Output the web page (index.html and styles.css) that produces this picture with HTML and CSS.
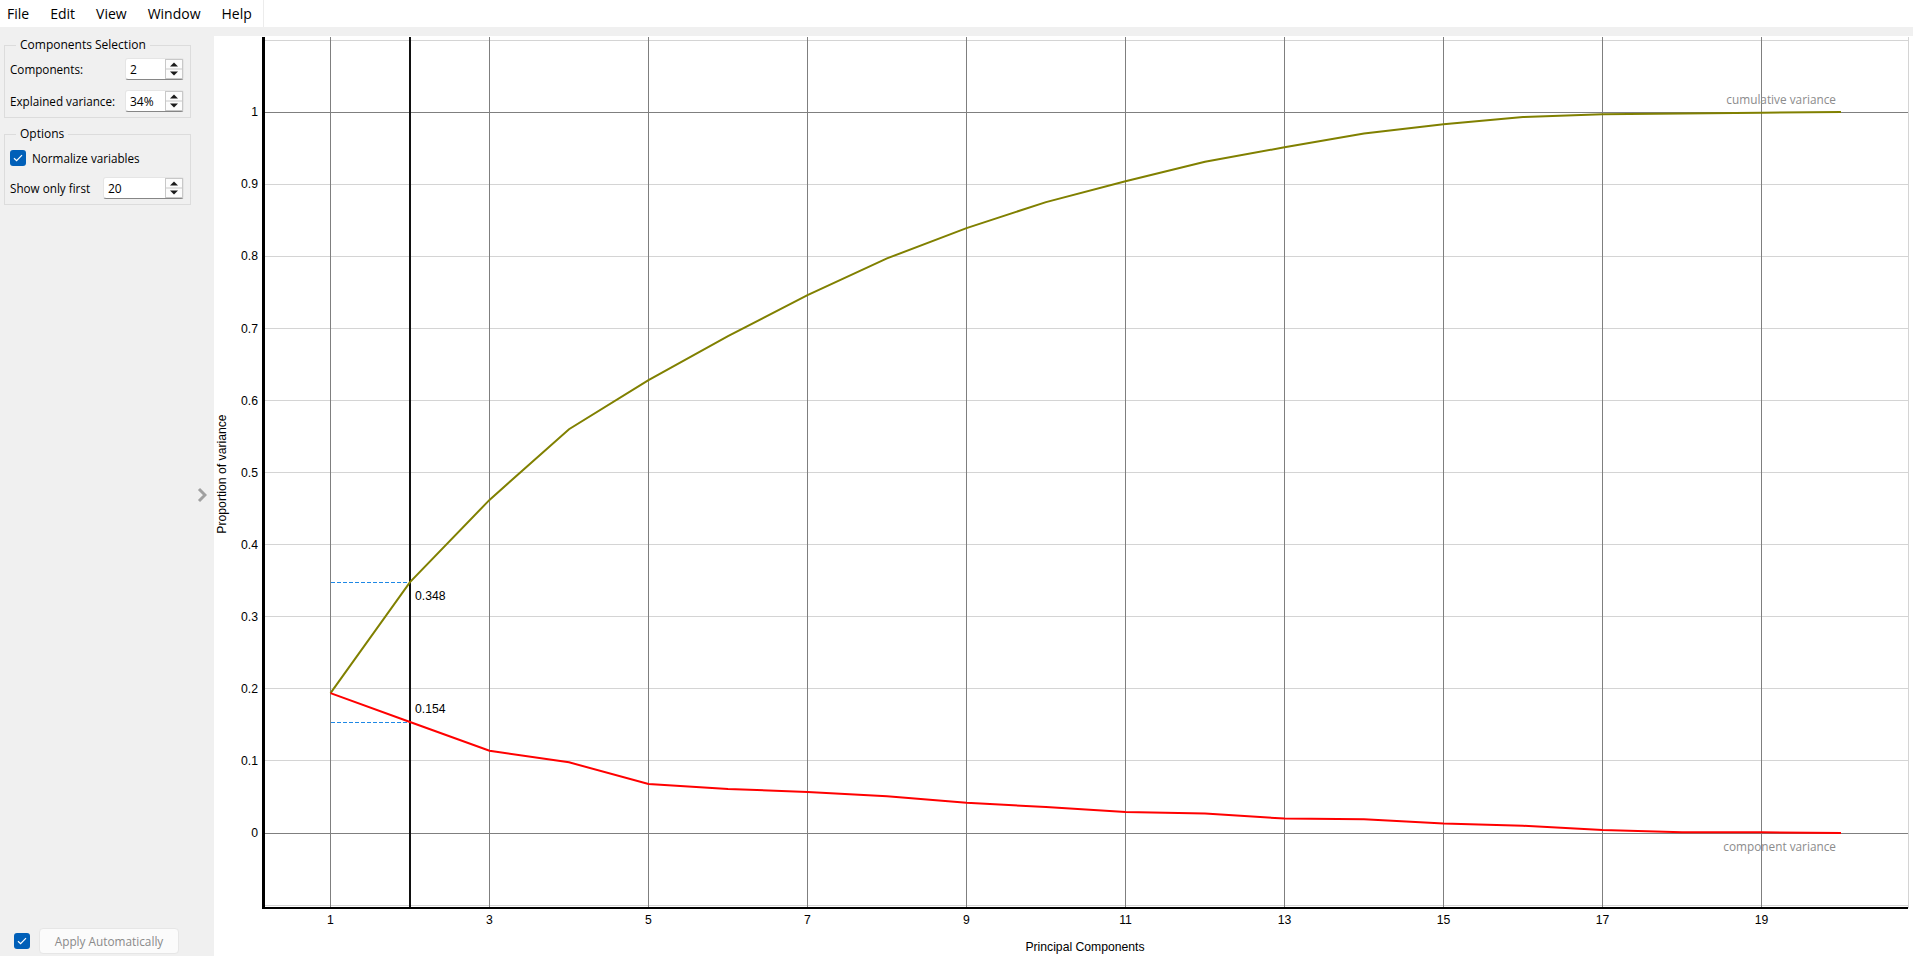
FILE: index.html
```html
<!DOCTYPE html>
<html lang="en">
<head>
    <meta charset="UTF-8">
    <title>PCA</title>
    <link rel="stylesheet" href="styles.css">
</head>
<body>
<div class="menubar">
    <ul class="menu">
        <li>File</li>
        <li>Edit</li>
        <li>View</li>
        <li>Window</li>
        <li>Help</li>
    </ul>
</div>

<div class="main">
    <aside class="sidebar">
        <div class="controls">
            <fieldset class="group">
                <legend>Components Selection</legend>
                <div class="row">
                    <label>Components:</label>
                    <div class="spin">
                        <span class="spin-value">2</span>
                        <svg class="spin-buttons" width="18" height="20" viewBox="0 0 18 20">
                            <rect x="0.5" y="0.5" width="17" height="19" fill="#fcfcfc" stroke="#c8c8c8"/>
                            <line x1="1" y1="10" x2="17" y2="10" stroke="#c8c8c8"/>
                            <path d="M5 7.5 L9 3.5 L13 7.5 Z" fill="#1a1a1a"/>
                            <path d="M5 12.5 L9 16.5 L13 12.5 Z" fill="#1a1a1a"/>
                        </svg>
                    </div>
                </div>
                <div class="row">
                    <label>Explained variance:</label>
                    <div class="spin">
                        <span class="spin-value">34%</span>
                        <svg class="spin-buttons" width="18" height="20" viewBox="0 0 18 20">
                            <rect x="0.5" y="0.5" width="17" height="19" fill="#fcfcfc" stroke="#c8c8c8"/>
                            <line x1="1" y1="10" x2="17" y2="10" stroke="#c8c8c8"/>
                            <path d="M5 7.5 L9 3.5 L13 7.5 Z" fill="#1a1a1a"/>
                            <path d="M5 12.5 L9 16.5 L13 12.5 Z" fill="#1a1a1a"/>
                        </svg>
                    </div>
                </div>
            </fieldset>

            <fieldset class="group options">
                <legend>Options</legend>
                <div class="row">
                    <span class="check">
                        <svg width="10" height="8" viewBox="0 0 10 8"><path d="M1 4.2 L3.6 6.6 L9 1.2" fill="none" stroke="#fff" stroke-width="1.2"/></svg>
                    </span>
                    <label class="check-label">Normalize variables</label>
                </div>
                <div class="row">
                    <label>Show only first</label>
                    <div class="spin wide">
                        <span class="spin-value">20</span>
                        <svg class="spin-buttons" width="18" height="20" viewBox="0 0 18 20">
                            <rect x="0.5" y="0.5" width="17" height="19" fill="#fcfcfc" stroke="#c8c8c8"/>
                            <line x1="1" y1="10" x2="17" y2="10" stroke="#c8c8c8"/>
                            <path d="M5 7.5 L9 3.5 L13 7.5 Z" fill="#1a1a1a"/>
                            <path d="M5 12.5 L9 16.5 L13 12.5 Z" fill="#1a1a1a"/>
                        </svg>
                    </div>
                </div>
            </fieldset>

            <div class="auto-row">
                <span class="check">
                    <svg width="10" height="8" viewBox="0 0 10 8"><path d="M1 4.2 L3.6 6.6 L9 1.2" fill="none" stroke="#fff" stroke-width="1.2"/></svg>
                </span>
                <button class="apply-btn">Apply Automatically</button>
            </div>
        </div>
        <div class="handle">
            <svg width="10" height="16" viewBox="0 0 10 16"><polyline points="2,2 8,8 2,14" fill="none" stroke="#a0a0a0" stroke-width="3"/></svg>
        </div>
    </aside>

    <div class="plot">
        <svg width="1699" height="920" viewBox="214 36 1699 920">
            <!-- light grid -->
            <g class="grid-light">
                <line x1="263" y1="40.5" x2="1908" y2="40.5"/>
                <line x1="263" y1="184.5" x2="1908" y2="184.5"/>
                <line x1="263" y1="256.5" x2="1908" y2="256.5"/>
                <line x1="263" y1="328.5" x2="1908" y2="328.5"/>
                <line x1="263" y1="400.5" x2="1908" y2="400.5"/>
                <line x1="263" y1="472.5" x2="1908" y2="472.5"/>
                <line x1="263" y1="544.5" x2="1908" y2="544.5"/>
                <line x1="263" y1="616.5" x2="1908" y2="616.5"/>
                <line x1="263" y1="688.5" x2="1908" y2="688.5"/>
                <line x1="263" y1="760.5" x2="1908" y2="760.5"/>
                <line x1="263" y1="905.5" x2="1908" y2="905.5"/>
                <line x1="1908.5" y1="37" x2="1908.5" y2="908"/>
            </g>
            <!-- dark grid -->
            <g class="grid-dark">
                <line x1="263" y1="112.5" x2="1908" y2="112.5"/>
                <line x1="263" y1="833.5" x2="1908" y2="833.5"/>
                <line x1="330.5" y1="37" x2="330.5" y2="908"/>
                <line x1="489.5" y1="37" x2="489.5" y2="908"/>
                <line x1="648.5" y1="37" x2="648.5" y2="908"/>
                <line x1="807.5" y1="37" x2="807.5" y2="908"/>
                <line x1="966.5" y1="37" x2="966.5" y2="908"/>
                <line x1="1125.5" y1="37" x2="1125.5" y2="908"/>
                <line x1="1284.5" y1="37" x2="1284.5" y2="908"/>
                <line x1="1443.5" y1="37" x2="1443.5" y2="908"/>
                <line x1="1602.5" y1="37" x2="1602.5" y2="908"/>
                <line x1="1761.5" y1="37" x2="1761.5" y2="908"/>
            </g>

            <!-- selected component marker -->
            <rect x="409" y="37" width="2" height="871" fill="#111"/>
            <g class="guide">
                <line x1="331" y1="582.5" x2="409" y2="582.5"/>
                <line x1="331" y1="722.5" x2="409" y2="722.5"/>
            </g>

            <!-- series -->
            <polyline class="cumulative" points="330.5,693.1 410,582.1 489.5,499.9 569,429.2 648.5,380.2 728,336.2 807.5,295.1 887,258.4 966.5,228.1 1046,202.1 1125.5,181.2 1205,161.7 1284.5,147.3 1364,133.6 1443.5,124.3 1523,117.1 1602.5,114.2 1682,113.4 1761.5,112.7 1841,112"/>
            <polyline class="component" points="330.5,693.1 410,722 489.5,750.8 569,762.3 648.5,784 728,789 807.5,791.9 887,796.2 966.5,802.7 1046,807 1125.5,812.1 1205,813.5 1284.5,818.6 1364,819.3 1443.5,823.6 1523,825.8 1602.5,830.1 1682,832.3 1761.5,832.3 1841,833"/>

            <!-- axes -->
            <rect x="262" y="37" width="3" height="872" fill="#000"/>
            <rect x="262" y="907" width="1646" height="2" fill="#000"/>

            <g class="tick y-tick">
                <text x="258" y="112" dy="0.35em">1</text>
                <text x="258" y="184.1" dy="0.35em">0.9</text>
                <text x="258" y="256.2" dy="0.35em">0.8</text>
                <text x="258" y="328.3" dy="0.35em">0.7</text>
                <text x="258" y="400.4" dy="0.35em">0.6</text>
                <text x="258" y="472.5" dy="0.35em">0.5</text>
                <text x="258" y="544.6" dy="0.35em">0.4</text>
                <text x="258" y="616.7" dy="0.35em">0.3</text>
                <text x="258" y="688.8" dy="0.35em">0.2</text>
                <text x="258" y="760.9" dy="0.35em">0.1</text>
                <text x="258" y="833" dy="0.35em">0</text>
            </g>
            <g class="tick x-tick">
                <text x="330.5" y="920" dy="0.35em">1</text>
                <text x="489.5" y="920" dy="0.35em">3</text>
                <text x="648.5" y="920" dy="0.35em">5</text>
                <text x="807.5" y="920" dy="0.35em">7</text>
                <text x="966.5" y="920" dy="0.35em">9</text>
                <text x="1125.5" y="920" dy="0.35em">11</text>
                <text x="1284.5" y="920" dy="0.35em">13</text>
                <text x="1443.5" y="920" dy="0.35em">15</text>
                <text x="1602.5" y="920" dy="0.35em">17</text>
                <text x="1761.5" y="920" dy="0.35em">19</text>
            </g>

            <text class="tick value" x="415" y="596" dy="0.35em">0.348</text>
            <text class="tick value" x="415" y="709" dy="0.35em">0.154</text>

            <text class="series-label" x="1836" y="100" dy="0.35em">cumulative variance</text>
            <text class="series-label" x="1836" y="847" dy="0.35em">component variance</text>

            <text class="axis-title" x="222" y="474" dy="0.35em" transform="rotate(-90 222 474)">Proportion of variance</text>
            <text class="axis-title" x="1085" y="947" dy="0.35em">Principal Components</text>
        </svg>
    </div>
</div>
</body>
</html>
```

FILE: styles.css
```css
* {
    margin: 0;
    padding: 0;
    box-sizing: border-box;
}
body {
    width: 1913px;
    height: 956px;
    overflow: hidden;
    background: #f0f0f0;
    color: #000;
    font-family: "Open Sans", "Noto Sans", sans-serif;
}

/* menu */
.menubar {
    height: 27px;
    background: #ffffff;
}
.menu {
    list-style-type: none;
    display: flex;
    width: 264px;
    height: 27px;
    border-right: 1px solid #ececec;
}
.menu li {
    font-size: 14px;
    line-height: 27px;
    padding: 0 10.5px;
}
.menu li:first-child {
    padding-left: 7px;
}

/* layout */
.main {
    display: flex;
    height: 929px;
}
.sidebar {
    width: 214px;
    display: flex;
}
.controls {
    width: 194px;
    display: flex;
    flex-direction: column;
    padding: 10px 0 2px 4px;
}
.handle {
    flex: 1;
    display: flex;
    align-items: center;
    justify-content: center;
    padding: 7px 4px 0 0;
}

/* group boxes */
.group {
    width: 187px;
    border: 1px solid #dcdcdc;
    padding: 5px 6px 5px 5px;
    font-size: 11.7px;
}
.group + .group {
    margin-top: 8px;
}
.group legend {
    margin-left: 6px;
    padding: 0 4px;
    font-size: 12px;
    line-height: 16px;
}
.row {
    display: flex;
    align-items: center;
    height: 22px;
}
.row + .row {
    margin-top: 10px;
}
.options .row + .row {
    margin-top: 8px;
}

/* spin box */
.spin {
    margin-left: auto;
    width: 59px;
    height: 22px;
    display: flex;
    align-items: center;
    justify-content: space-between;
    padding-left: 4px;
    background: #ffffff;
    border: 1px solid #e5e5e5;
    border-bottom-color: #868686;
    border-radius: 3px;
    font-size: 12px;
}
.spin.wide {
    width: 81px;
}
.spin-buttons {
    display: block;
}

/* check boxes */
.check {
    width: 16px;
    height: 16px;
    display: flex;
    align-items: center;
    justify-content: center;
    background: #005fb8;
    border-radius: 3px;
}
.check-label {
    margin-left: 6px;
}

/* bottom */
.auto-row {
    margin-top: auto;
    display: flex;
    align-items: center;
    gap: 9px;
    padding-left: 10px;
}
.apply-btn {
    width: 140px;
    height: 26px;
    background: #fbfbfb;
    border: 1px solid #e6e6e6;
    border-radius: 4px;
    color: #8a8a8a;
    font-family: "Open Sans", "Noto Sans", sans-serif;
    font-size: 11.8px;
}

/* plot */
.plot {
    flex: 1;
    margin-top: 9px;
    background: #ffffff;
}
.plot svg {
    display: block;
}
.grid-light line {
    stroke: #d4d4d4;
    stroke-width: 1;
}
.grid-dark line {
    stroke: #7f7f7f;
    stroke-width: 1;
}
.guide line {
    stroke: #1e88e5;
    stroke-width: 1;
    stroke-dasharray: 4 2;
}
.cumulative {
    fill: none;
    stroke: #808000;
    stroke-width: 2;
}
.component {
    fill: none;
    stroke: #ff0000;
    stroke-width: 2;
}
.tick, .axis-title {
    font-family: "Liberation Sans", Arial, sans-serif;
    font-size: 12.2px;
    fill: #000;
}
.y-tick {
    text-anchor: end;
}
.x-tick, .axis-title {
    text-anchor: middle;
}
.series-label {
    font-family: "Open Sans", "Noto Sans", sans-serif;
    font-size: 11.8px;
    fill: #8c8c8c;
    text-anchor: end;
}
```
